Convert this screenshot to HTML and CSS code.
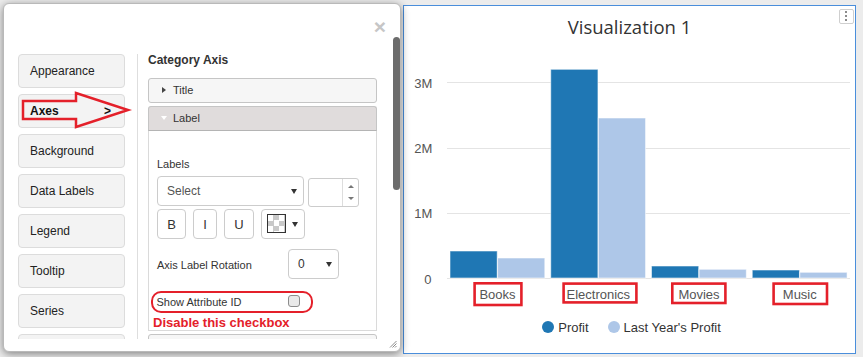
FILE: index.html
```html
<!DOCTYPE html>
<html>
<head>
<meta charset="utf-8">
<title>Visualization properties</title>
<link rel="stylesheet" href="styles.css">
</head>
<body>
<div class="stage">
  <div class="dialog">
    <div class="dlg-head"><span class="close">×</span></div>
    <div class="dlg-main">
      <div class="dlg-scroll">
        <div class="nav">
          <div class="nav-btn">Appearance</div>
          <div class="nav-btn active"><span>Axes</span><span>&gt;</span></div>
          <div class="nav-btn">Background</div>
          <div class="nav-btn">Data Labels</div>
          <div class="nav-btn">Legend</div>
          <div class="nav-btn">Tooltip</div>
          <div class="nav-btn">Series</div>
          <div class="nav-btn"></div>
        </div>
        <div class="panel">
          <div class="panel-title">Category Axis</div>
          <div class="acc-head closed"><span class="acc-icon"><span class="tri-e"></span></span><span>Title</span></div>
          <div class="acc-head open"><span class="acc-icon"><span class="tri-s"></span></span><span>Label</span></div>
          <div class="acc-body">
            <div class="field-label">Labels</div>
            <div class="row">
              <div class="select"><span>Select</span><span class="caret"></span></div>
              <div class="spinner">
                <div class="spin-input"></div>
                <div class="spin-btns"><span class="up"></span><span class="down"></span></div>
              </div>
            </div>
            <div class="row fmt">
              <div class="fbtn b">B</div>
              <div class="fbtn i">I</div>
              <div class="fbtn u">U</div>
              <div class="picker"><span class="swatch"></span><span class="caret"></span></div>
            </div>
            <div class="row rot">
              <span class="rot-label">Axis Label Rotation</span>
              <div class="select small"><span>0</span><span class="caret"></span></div>
            </div>
            <div class="attr-row"><span class="attr-text">Show Attribute ID</span><span class="checkbox"></span></div>
            <div class="note">Disable this checkbox</div>
          </div>
          <div class="acc-head closed next"></div>
        </div>
      </div>
      <div class="vscroll"><div class="thumb"></div></div>
    </div>
    <div class="dlg-foot">
      <svg class="grip" width="8" height="8" viewBox="0 0 8 8"><path d="M1 7.5L7.5 1M3.5 7.5L7.5 3.5M6 7.5L7.5 6" stroke="#8a8a8a" stroke-width="1" fill="none"/></svg>
    </div>
    <svg class="arrow" width="130" height="130" viewBox="0 0 130 130"><polygon points="19,97 72,97 72,89 124,106 72,123 72,115 19,115" fill="none" stroke="#e4202a" stroke-width="2.5" stroke-linejoin="miter"/></svg>
  </div>

  <div class="chart">
    <div class="chart-title">Visualization 1</div>
    <div class="menu-btn"><i></i><i></i><i></i></div>
    <svg class="plot" width="451" height="264" viewBox="0 0 451 264">
      <g stroke="#e4e4e4" stroke-width="1">
        <line x1="43" x2="446" y1="36.5" y2="36.5"/>
        <line x1="43" x2="446" y1="102.5" y2="102.5"/>
        <line x1="43" x2="446" y1="167.5" y2="167.5"/>
        <line x1="43" x2="446" y1="232.5" y2="232.5"/>
      </g>
      <g class="ylab">
        <text x="28.3" y="42.3" text-anchor="end">3M</text>
        <text x="28.3" y="107.3" text-anchor="end">2M</text>
        <text x="28.3" y="172.3" text-anchor="end">1M</text>
        <text x="27.5" y="238.3" text-anchor="end">0</text>
      </g>
      <g stroke="#ffffff" stroke-opacity="0.55" stroke-width="1">
        <rect x="46" y="205" width="47.2" height="27" fill="#1f77b4"/>
        <rect x="93.6" y="212" width="47.2" height="20" fill="#aec7e8"/>
        <rect x="146.75" y="23.3" width="47.2" height="208.7" fill="#1f77b4"/>
        <rect x="194.35" y="72" width="47.2" height="160" fill="#aec7e8"/>
        <rect x="247.5" y="220" width="47.2" height="12" fill="#1f77b4"/>
        <rect x="295.1" y="223.3" width="47.2" height="8.7" fill="#aec7e8"/>
        <rect x="348.25" y="224" width="47.2" height="8" fill="#1f77b4"/>
        <rect x="395.85" y="226.3" width="47.2" height="5.7" fill="#aec7e8"/>
      </g>
      <g class="xlab">
        <text x="93.5" y="253.3" text-anchor="middle">Books</text>
        <text x="194.3" y="253.3" text-anchor="middle">Electronics</text>
        <text x="295" y="253.3" text-anchor="middle">Movies</text>
        <text x="395.8" y="253.3" text-anchor="middle">Music</text>
      </g>
      <g fill="none" stroke="#e4202a" stroke-width="2.6">
        <rect x="70.6" y="237.3" width="46.8" height="21.7"/>
        <rect x="159.6" y="237.6" width="72.8" height="18.8"/>
        <rect x="268.3" y="237.6" width="53.1" height="19.4"/>
        <rect x="369.6" y="237.6" width="53.4" height="20.4"/>
      </g>
    </svg>
    <div class="legend">
      <div class="legend-item"><span class="dot profit"></span><span>Profit</span></div>
      <div class="legend-item"><span class="dot last"></span><span>Last Year's Profit</span></div>
    </div>
  </div>
</div>
</body>
</html>
```

FILE: styles.css
```css
* { box-sizing: border-box; }
html, body { margin: 0; padding: 0; }
body {
  background: #ececec;
  font-family: "Liberation Sans", Arial, sans-serif;
  width: 863px;
  height: 357px;
  overflow: hidden;
}
.stage {
  display: flex;
  align-items: flex-start;
  padding: 3px 0 0 3px;
}

/* dialog */
.dialog {
  position: relative;
  z-index: 2;
  flex: none;
  width: 398px;
  height: 349px;
  background: #fff;
  border: 1px solid #b9b9b9;
  border-radius: 6px;
  box-shadow: 0 2px 9px rgba(0, 0, 0, 0.45);
  display: flex;
  flex-direction: column;
}
.dlg-head {
  flex: none;
  height: 33px;
  display: flex;
  justify-content: flex-end;
  padding: 14px 14px 0 0;
}
.close {
  font-size: 21px;
  font-weight: bold;
  line-height: 18px;
  color: #c6c6c6;
}
.dlg-main {
  flex: none;
  height: 302px;
  display: flex;
}
.dlg-scroll {
  flex: 1;
  display: flex;
  overflow: hidden;
  padding: 17px 0 0 14px;
}
.nav {
  flex: none;
  width: 120px;
  padding-right: 12px;
  border-right: 1px solid #dedede;
}
.nav-btn {
  height: 34px;
  margin-bottom: 6px;
  display: flex;
  align-items: center;
  justify-content: space-between;
  padding: 0 13px 0 11px;
  background: #f3f3f3;
  border: 1px solid #dcdcdc;
  border-radius: 4px;
  font-size: 12px;
  color: #222;
}
.nav-btn.active { font-weight: bold; color: #111; }
.panel {
  flex: none;
  width: 229px;
  margin-left: 10px;
  color: #333;
}
.panel-title {
  font-size: 12px;
  font-weight: bold;
  line-height: 12px;
  margin-bottom: 12px;
}
.acc-head {
  height: 25px;
  display: flex;
  align-items: center;
  padding: 0 0 2px 7px;
  border: 1px solid #c5c5c5;
  border-radius: 3px;
  background: #f6f6f6;
  font-size: 11px;
  color: #333;
}
.acc-head.closed { margin-bottom: 3px; }
.acc-head.open {
  background: #e0dcdc;
  border-radius: 3px 3px 0 0;
  border-bottom-color: #b4b4b4;
}
.acc-head.next { margin-top: 3px; }
.acc-icon {
  width: 16px;
  height: 16px;
  display: flex;
  align-items: center;
  justify-content: center;
  margin-right: 1px;
}
.tri-e {
  border-left: 4px solid #444;
  border-top: 3.5px solid transparent;
  border-bottom: 3.5px solid transparent;
}
.tri-s {
  border-top: 4px solid #fff;
  border-left: 3.5px solid transparent;
  border-right: 3.5px solid transparent;
}
.acc-body {
  height: 200px;
  border: 1px solid #dadada;
  border-top: 0;
  padding: 27px 0 0 8px;
  font-size: 11px;
}
.field-label {
  line-height: 13px;
  margin-bottom: 5px;
}
.row {
  display: flex;
  height: 30px;
}
.select {
  width: 147px;
  height: 30px;
  border: 1px solid #ccc;
  border-radius: 4px;
  display: flex;
  align-items: center;
  justify-content: space-between;
  padding: 0 6px 0 9px;
  font-size: 12px;
  color: #555;
}
.caret {
  border-top: 5px solid #333;
  border-left: 3px solid transparent;
  border-right: 3px solid transparent;
}
.spinner {
  width: 51px;
  height: 29px;
  margin: 2px 0 0 4px;
  border: 1px solid #ccc;
  border-radius: 3px;
  display: flex;
}
.spin-input { flex: 1; }
.spin-btns {
  width: 16px;
  border-left: 1px solid #ddd;
  display: flex;
  flex-direction: column;
  align-items: center;
  justify-content: center;
  gap: 9px;
}
.up {
  border-bottom: 3.5px solid #777;
  border-left: 3px solid transparent;
  border-right: 3px solid transparent;
}
.down {
  border-top: 3.5px solid #777;
  border-left: 3px solid transparent;
  border-right: 3px solid transparent;
}
.fmt { margin-top: 3px; gap: 7px; }
.fbtn {
  height: 30px;
  border: 1px solid #ccc;
  border-radius: 4px;
  display: flex;
  align-items: center;
  justify-content: center;
  font-size: 13px;
  color: #333;
}
.fbtn.b { width: 29px; }
.fbtn.i { width: 24px; }
.fbtn.u { width: 30px; }
.picker {
  width: 44px;
  height: 30px;
  border: 1px solid #ccc;
  border-radius: 4px;
  display: flex;
  align-items: center;
  padding-left: 5px;
}
.swatch {
  width: 19px;
  height: 19px;
  margin-top: -2px;
  border: 1px solid #333;
  background: conic-gradient(#c9c9c9 25%, #fff 0 50%, #c9c9c9 0 75%, #fff 0) 0 0 / 11px 11px;
}
.picker .caret { margin-left: 6px; }
.rot { margin-top: 10px; align-items: center; }
.rot-label { width: 131px; flex: none; padding-top: 2px; }
.select.small { width: 51px; color: #333; }
.attr-row {
  width: 162px;
  height: 22px;
  margin: 12px 0 0 -6px;
  border: 2.5px solid #e4202a;
  border-radius: 10px;
  display: flex;
  align-items: flex-start;
  padding-left: 3.5px;
}
.attr-text {
  width: 131px;
  flex: none;
  line-height: 17px;
  padding-top: 1px;
}
.checkbox {
  width: 12px;
  height: 12px;
  margin-top: 1.5px;
  border: 1px solid #8c8c8c;
  border-radius: 3px;
  background: #e9e9e9;
}
.note {
  margin: 1.5px 0 0 -4px;
  font-size: 13px;
  font-weight: bold;
  line-height: 15px;
  color: #e4202a;
}
.vscroll { flex: none; width: 7px; }
.thumb {
  height: 153px;
  background: #6c6c6c;
  border-radius: 4px;
}
.dlg-foot {
  flex: 1;
  display: flex;
  justify-content: flex-end;
  align-items: flex-end;
  padding: 0 3px 3px 0;
}
.grip { display: block; }
.arrow {
  position: absolute;
  left: 0;
  top: 0;
  overflow: visible;
  pointer-events: none;
}

/* chart */
.chart {
  position: relative;
  flex: none;
  width: 453px;
  height: 349px;
  margin: 2px 0 0 2px;
  background: #fff;
  border: 1px solid #4a8edb;
  display: flex;
  flex-direction: column;
}
.chart-title {
  height: 40px;
  padding-top: 9px;
  text-align: center;
  font-family: "Open Sans", sans-serif;
  font-size: 18.5px;
  line-height: 24px;
  color: #333;
}
.menu-btn {
  position: absolute;
  top: 2.5px;
  right: 1.5px;
  width: 15px;
  height: 15px;
  border: 1px solid #cfcfcf;
  border-radius: 2px;
  background: #fff;
  display: flex;
  flex-direction: column;
  align-items: center;
  justify-content: center;
  gap: 1.5px;
}
.menu-btn i {
  width: 2.5px;
  height: 2.5px;
  background: #666;
  border-radius: 50%;
}
.plot { display: block; flex: none; }
.plot text {
  font-family: "Liberation Sans", Arial, sans-serif;
  font-size: 13px;
  fill: #555;
}
.legend {
  height: 34px;
  display: flex;
  justify-content: center;
  align-items: center;
  padding-left: 4px;
  font-size: 13px;
  color: #333;
}
.legend-item {
  display: flex;
  align-items: center;
  gap: 4px;
}
.legend-item + .legend-item { margin-left: 19px; }
.dot {
  width: 12px;
  height: 12px;
  border-radius: 50%;
}
.dot.profit { background: #1f77b4; }
.dot.last { background: #aec7e8; }
```
